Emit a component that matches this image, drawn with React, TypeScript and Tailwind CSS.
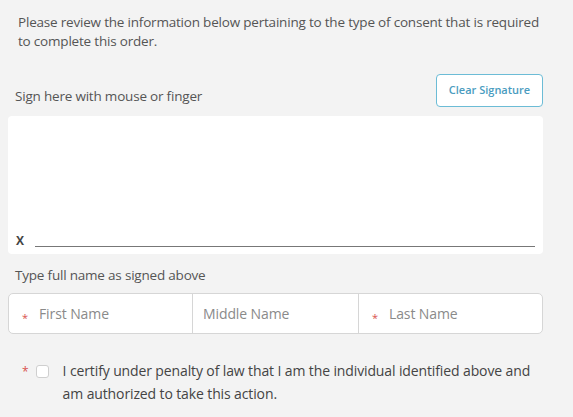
import React from 'react';

const App: React.FC = () => {
  return (
    <div
      className="min-h-[417px] w-[573px] bg-[#f3f3f3] text-[#555] overflow-hidden"
      style={{ fontFamily: '"Open Sans", "Liberation Sans", sans-serif' }}
    >
      <div className="w-[535px] ml-2 pt-[13px]">
        {/* Intro */}
        <p className="pl-[10px] text-[13.5px] leading-[19px] tracking-[-0.2px] text-[#555]">
          Please review the information below pertaining to the type of consent that is required to complete this order.
        </p>

        {/* Signature header */}
        <div className="mt-[23px] flex items-end justify-between">
          <span className="pl-[7px] pb-[1px] text-[13.5px] leading-[20px] tracking-[-0.2px] text-[#555]">
            Sign here with mouse or finger
          </span>
          <button className="h-[33px] w-[107px] rounded-[4px] border border-[#6cbcd6] bg-white text-[11px] font-semibold text-[#4a9cc0]">
            Clear Signature
          </button>
        </div>

        {/* Signature pad */}
        <div className="mt-[9px] h-[138px] rounded-[4px] bg-white flex items-end pl-[8px] pr-[8px] pb-[7px]">
          <span className="text-[12px] font-bold leading-none text-[#444]">X</span>
          <div className="ml-[11px] flex-1 border-b border-[#777]" />
        </div>

        {/* Name */}
        <p className="mt-[11px] pl-[7px] text-[13.5px] leading-[20px] tracking-[-0.2px] text-[#555]">
          Type full name as signed above
        </p>
        <div className="mt-[8px] flex h-[41px] rounded-[5px] border border-[#d6d6d6] bg-white text-[14px] tracking-[-0.1px]">
          <div className="flex w-[184px] items-center border-r border-[#d6d6d6] pl-[13px]">
            <span className="mt-[9px] text-[11px] text-[#d9534f]">*</span>
            <span className="ml-[11px] text-[#8a8a8a]">First Name</span>
          </div>
          <div className="flex w-[166px] items-center border-r border-[#d6d6d6] pl-[10px]">
            <span className="text-[#8a8a8a]">Middle Name</span>
          </div>
          <div className="flex flex-1 items-center pl-[13px]">
            <span className="mt-[9px] text-[11px] text-[#d9534f]">*</span>
            <span className="ml-[11px] text-[#8a8a8a]">Last Name</span>
          </div>
        </div>

        {/* Certify */}
        <div className="mt-[25px] flex items-start">
          <span className="ml-[14px] mt-[3px] text-[12px] leading-[20px] text-[#d9534f]">*</span>
          <span className="ml-[7px] mt-[6px] h-[13px] w-[13px] shrink-0 rounded-[3px] border border-[#cfcfcf] bg-white" />
          <p className="ml-[14px] text-[14px] leading-[23px] tracking-[-0.12px] font-medium text-[#444]">
            I certify under penalty of law that I am the individual identified above and am authorized to take this action.
          </p>
        </div>
      </div>
    </div>
  );
};

export default App;
